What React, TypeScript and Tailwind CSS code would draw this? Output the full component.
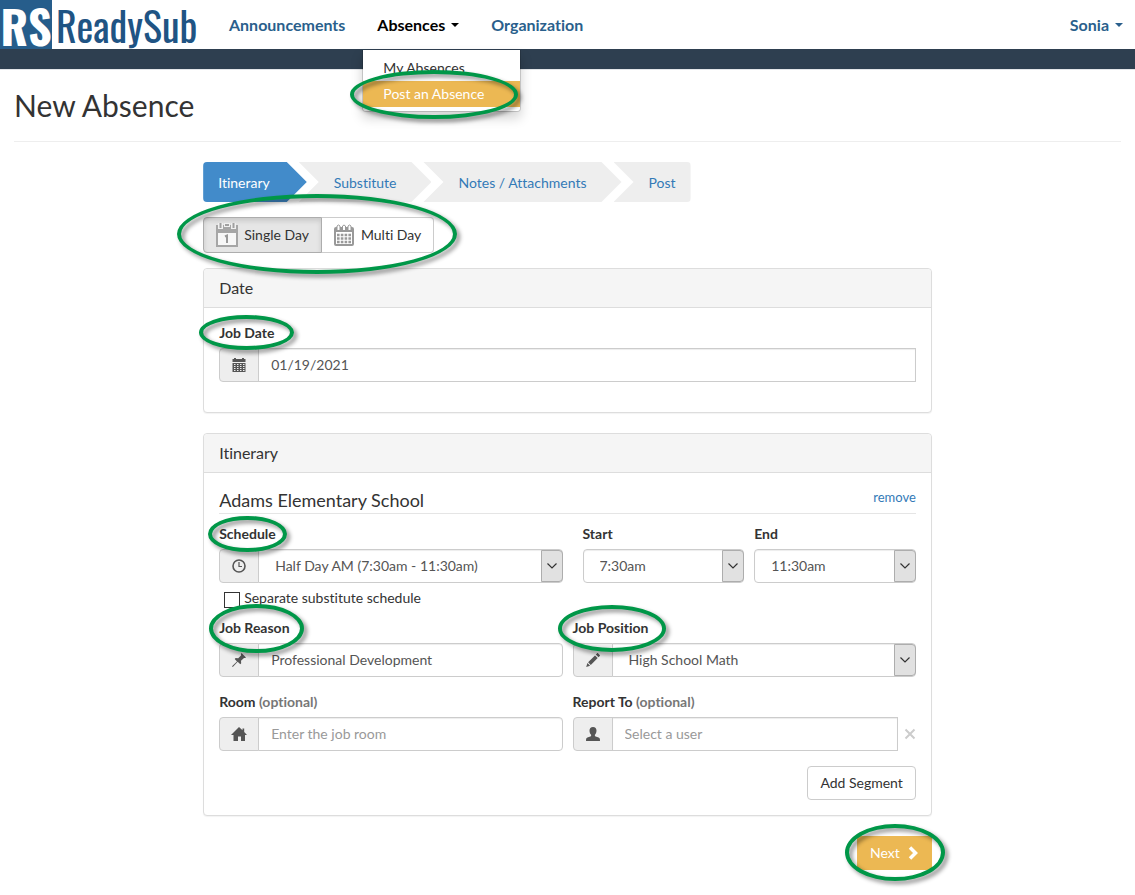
import { useState, type ReactNode } from 'react';
import clsx from 'clsx';

interface IconProps {
  className?: string;
}

function CalendarIcon() {
  return (
    <svg viewBox="0 0 14 14" className="h-3.5 w-3.5" fill="currentColor" aria-hidden="true">
      <path d="M2 0h2v1h6V0h2v1h1.5v3H.5V1H2z" />
      <path
        fillRule="evenodd"
        d="M.5 5h13v9H.5zM2 6v1h1.500V6zm3 0v1h1.500V6zm3 0v1h1.500V6zm3 0v1h1.500V6zM2 8v1h1.500V8zm3 0v1h1.500V8zm3 0v1h1.500V8zm3 0v1h1.500V8zM2 10v1h1.500v-1zm3 0v1h1.500v-1zm3 0v1h1.500v-1zm3 0v1h1.500v-1zM2 12v1h1.500v-1zm3 0v1h1.500v-1zm3 0v1h1.500v-1zm3 0v1h1.500v-1z"
      />
    </svg>
  );
}

function ClockIcon() {
  return (
    <svg viewBox="0 0 14 14" className="h-3.5 w-3.5" fill="none" stroke="currentColor" aria-hidden="true">
      <circle cx="7" cy="7" r="6" strokeWidth="1.6" />
      <path d="M7 3v4.5h3" strokeWidth="1.2" />
    </svg>
  );
}

function PushpinIcon() {
  return (
    <svg viewBox="0 0 14 14" className="h-3.5 w-3.5" fill="currentColor" aria-hidden="true">
      <path d="M9.500 0L14 4.500l-.8.600-1.200-.2-3 2.800.2 2.600-.9.900-2.600-2.400L.8 14 0 13.200l5-4.800L2.700 6l.9-.9 2.600.2 3-3-.3-1.400z" />
    </svg>
  );
}

function PencilIcon() {
  return (
    <svg viewBox="0 0 14 14" className="h-3.5 w-3.5" fill="currentColor" aria-hidden="true">
      <path d="M11 .4c.4-.4.8-.4 1.200 0l1.500 1.500c.4.4.4.8 0 1.200l-1.200 1.200-2.700-2.700zM9 2.400l2.700 2.700-6.900 6.900-2.700-2.700zM1.400 10l2.700 2.700L.2 13.900z" />
    </svg>
  );
}

function HomeIcon() {
  return (
    <svg viewBox="0 0 16 14" className="h-3.5 w-4" fill="currentColor" aria-hidden="true">
      <path d="M8 0l3.500 3.300V1.500h1.700V5L16 8h-2v6h-4V9.500H7V14H2.500V8H0z" />
    </svg>
  );
}

function UserIcon() {
  return (
    <svg viewBox="0 0 14 14" className="h-3.5 w-3.5" fill="currentColor" aria-hidden="true">
      <path d="M7 0c2.300 0 3.500 1.500 3.500 3.600 0 1.800-.6 3.300-1.600 4.200v1.300c.3.600 4 1.300 4.700 2.200.3.500.4 1.500.4 2.700H0c0-1.200.1-2.200.4-2.700.7-.9 4.400-1.600 4.700-2.200V7.800C4.100 6.900 3.500 5.400 3.500 3.600 3.500 1.500 4.700 0 7 0z" />
    </svg>
  );
}

function ChevronDown({ className }: IconProps) {
  return (
    <svg viewBox="0 0 10 6" className={className} fill="none" stroke="#333" strokeWidth="1.2" aria-hidden="true">
      <path d="M.5.5L5 5 9.500.5" />
    </svg>
  );
}

function Caret() {
  return (
    <svg viewBox="0 0 8 4" className="ml-1.5 h-1 w-2" fill="currentColor" aria-hidden="true">
      <path d="M0 0h8L4 4z" />
    </svg>
  );
}

function SingleDayIcon() {
  return (
    <svg viewBox="0 0 22 24" className="h-6 w-[22px]" aria-hidden="true">
      <path d="M0 2h22v22H0z" fill="#a6a6a6" />
      <path d="M2 10h18v12H2z" fill="#f7f7f7" />
      <path d="M2 0h5v6H2zM15 0h5v6h-5zM8 0h6v4H8z" fill="#f0f0f0" />
      <path d="M3.500 0h2v5h-2zM16.500 0h2v5h-2zM9 1h4v2H9z" fill="#a0a0a0" />
      <path d="M9 13.500l2-1v7.500" fill="none" stroke="#999" strokeWidth="2" />
    </svg>
  );
}

function MultiDayIcon() {
  return (
    <svg viewBox="0 0 20 22" className="h-[22px] w-5" fill="none" aria-hidden="true">
      <rect x="1" y="4" width="18" height="17" rx="1" stroke="#999" strokeWidth="2" />
      <path d="M1 4h18v4H1z" fill="#999" />
      <path d="M3 6V2q1.500-2 3 0v4M8.500 6V2q1.500-2 3 0v4M14 6V2q1.500-2 3 0v4" fill="#fff" stroke="#999" />
      <path d="M3 11h14M3 14.500h14M3 18h14" stroke="#999" strokeWidth="2.500" strokeDasharray="2.600 1.200" />
    </svg>
  );
}

// Green callout drawn around whatever relative parent it sits in
function Ring({ className }: { className: string }) {
  return (
    <span
      aria-hidden="true"
      className={clsx(
        'pointer-events-none absolute z-30 rounded-[50%] border-4 border-[#009748] drop-shadow-[3px_3px_2px_rgba(0,0,0,0.45)]',
        className,
      )}
    />
  );
}

function FieldLabel({ id, text, optional, ring }: { id: string; text: string; optional?: boolean; ring?: string }) {
  return (
    <div className="mb-[5px] flex">
      <label htmlFor={id} className="relative font-bold">
        {text}
        {optional ? <span className="text-[#777]"> (optional)</span> : null}
        {ring ? <Ring className={ring} /> : null}
      </label>
    </div>
  );
}

function Addon({ children }: { children: ReactNode }) {
  return (
    <span className="flex w-10 shrink-0 items-center justify-center rounded-l border border-[#ccc] bg-[#eee] text-[#555]">
      {children}
    </span>
  );
}

interface InputFieldProps {
  id: string;
  icon: ReactNode;
  value?: string;
  placeholder?: string;
  square?: boolean;
}

function InputField({ id, icon, value, placeholder, square }: InputFieldProps) {
  return (
    <div className="flex h-[34px] min-w-0 flex-1">
      <Addon>{icon}</Addon>
      <input
        id={id}
        type="text"
        defaultValue={value}
        placeholder={placeholder}
        className={clsx(
          '-ml-px min-w-0 flex-1 border border-[#ccc] bg-white px-3 text-[#555] shadow-[inset_0_1px_1px_rgba(0,0,0,0.075)] outline-none placeholder:text-[#999]',
          !square && 'rounded-r',
        )}
      />
    </div>
  );
}

function SelectField({ id, icon, options }: { id: string; icon?: ReactNode; options: string[] }) {
  return (
    <div className="flex h-[34px]">
      {icon ? <Addon>{icon}</Addon> : null}
      <div className={clsx('relative min-w-0 flex-1', icon && '-ml-px')}>
        <select
          id={id}
          className={clsx(
            'h-full w-full appearance-none rounded-r border border-[#ccc] bg-white pr-6 pl-4 text-[#555] shadow-[inset_0_1px_1px_rgba(0,0,0,0.075)] outline-none',
            !icon && 'rounded-l',
          )}
        >
          {options.map((option) => (
            <option key={option}>{option}</option>
          ))}
        </select>
        <span className="pointer-events-none absolute inset-y-px right-0 flex w-[22px] items-center justify-center rounded-r-sm border border-[#adadad] bg-[#e1e1e1]">
          <ChevronDown className="h-1.5 w-2.5" />
        </span>
      </div>
    </div>
  );
}

function Panel({ title, children }: { title: string; children: ReactNode }) {
  return (
    <section className="mb-5 rounded border border-[#ddd] bg-white shadow-[0_1px_1px_rgba(0,0,0,0.05)]">
      <h2 className="rounded-t border-b border-[#ddd] bg-[#f5f5f5] px-[15px] py-2.5 text-base leading-[18px]">{title}</h2>
      <div className="p-[15px]">{children}</div>
    </section>
  );
}

function NavBar() {
  return (
    <header>
      <nav className="flex h-[49px] items-center bg-white text-base font-bold text-[#2a5f8c]">
        <a
          href="#"
          className="flex h-full w-[213px] shrink-0 items-center font-['Oswald','Roboto_Condensed','Open_Sans_Condensed','Noto_Sans_ExtraCondensed','Liberation_Sans',sans-serif] leading-none"
        >
          <span className="flex h-full w-[52px] shrink-0 items-center justify-center bg-[#265d8b] text-[46px] text-white">RS</span>
          <span className="ml-1 text-[40px] font-normal text-[#1f5484]">ReadySub</span>
        </a>
        <a href="#" className="px-4">Announcements</a>
        <div className="relative flex h-full items-center">
          <button type="button" className="flex items-center px-4 text-black">
            Absences
            <Caret />
          </button>
          <ul className="absolute top-[50px] left-px z-20 w-[159px] rounded-b border border-t-0 border-black/15 bg-white bg-clip-padding pt-[5px] pb-1 text-sm leading-5 font-normal text-[#333] shadow-[0_6px_12px_rgba(0,0,0,0.175)]">
            <li>
              <a href="#" className="block px-5 py-[3px]">My Absences</a>
            </li>
            <li className="relative">
              <a href="#" className="block bg-[#ecb853] px-5 py-[3px] text-white">Post an Absence</a>
              <Ring className="-top-[11px] right-0.5 -bottom-3 -left-[13px]" />
            </li>
          </ul>
        </div>
        <a href="#" className="px-4">Organization</a>
        <button type="button" className="ml-auto flex items-center px-3">
          Sonia
          <Caret />
        </button>
      </nav>
      <div className="h-[21px] border-b border-[#e3e6e9] bg-[#2e3f50]" />
    </header>
  );
}

const steps = ['Itinerary', 'Substitute', 'Notes / Attachments', 'Post'];

function StepWizard() {
  return (
    <ol className="flex h-10">
      {steps.map((step, i) => (
        <li
          key={step}
          className={clsx(
            'flex items-center pt-0.5',
            i === 0 &&
              'rounded-l bg-[#428bca] pr-[37px] pl-[15px] text-white [clip-path:polygon(0_0,calc(100%_-_20px)_0,100%_50%,calc(100%_-_20px)_100%,0_100%)]',
            i > 0 && '-ml-2 bg-[#eee] text-[#337ab7]',
            i > 0 &&
              i < steps.length - 1 &&
              'px-[35px] [clip-path:polygon(0_0,calc(100%_-_20px)_0,100%_50%,calc(100%_-_20px)_100%,0_100%,20px_50%)]',
            i === steps.length - 1 &&
              'rounded-r pr-[15px] pl-[35px] [clip-path:polygon(0_0,100%_0,100%_100%,0_100%,20px_50%)]',
          )}
        >
          <a href="#">{step}</a>
        </li>
      ))}
    </ol>
  );
}

function DayToggle() {
  const [multi, setMulti] = useState(false);
  const active = 'border-[#adadad] bg-[#e6e6e6] shadow-[inset_0_3px_5px_rgba(0,0,0,0.125)]';

  return (
    <div className="my-[15px] flex">
      <div className="relative flex h-9">
        <button
          type="button"
          aria-pressed={!multi}
          onClick={() => setMulti(false)}
          className={clsx('flex items-center gap-1.5 rounded-l border px-3', multi ? 'border-[#ccc]' : active)}
        >
          <SingleDayIcon />
          Single Day
        </button>
        <button
          type="button"
          aria-pressed={multi}
          onClick={() => setMulti(true)}
          className={clsx(
            '-ml-px flex items-center gap-[7px] rounded-r border px-3',
            multi ? active : 'border-[#ccc] border-l-[#adadad]',
          )}
        >
          <MultiDayIcon />
          Multi Day
        </button>
        <Ring className="-top-[23px] -right-[23px] -bottom-[21px] -left-[26px]" />
      </div>
    </div>
  );
}

export default function App() {
  return (
    <div className="min-h-screen bg-white font-['Lato',sans-serif] text-sm leading-5 text-[#333] [font-variant-ligatures:none]">
      <NavBar />
      <h1 className="mx-3.5 mb-5 border-b border-[#eee] pt-[19px] pb-[19px] text-[30px] leading-[33px]">New Absence</h1>
      <main className="mx-auto w-2/3 px-3.5 pb-6">
        <StepWizard />
        <DayToggle />

        <Panel title="Date">
          <FieldLabel id="job-date" text="Job Date" ring="-top-2 -right-5 -bottom-[7px] -left-5" />
          <div className="mb-[15px] flex">
            <InputField id="job-date" icon={<CalendarIcon />} value="01/19/2021" square />
          </div>
        </Panel>

        <Panel title="Itinerary">
          <div className="mb-2.5 flex h-[26px] justify-between border-b border-[#e5e5e5]">
            <h3 className="text-lg leading-6">Adams Elementary School</h3>
            <a href="#" className="text-[13px] leading-[18px] text-[#337ab7]">remove</a>
          </div>

          <div className="grid grid-cols-2 gap-x-2.5">
            <div>
              <FieldLabel id="schedule" text="Schedule" ring="-top-2 -right-[11px] -bottom-2 -left-[11px]" />
              <SelectField id="schedule" icon={<ClockIcon />} options={['Half Day AM (7:30am - 11:30am)']} />
            </div>
            <div className="grid grid-cols-2 gap-x-2.5 pl-2.5">
              <div>
                <FieldLabel id="start" text="Start" />
                <SelectField id="start" options={['7:30am']} />
              </div>
              <div>
                <FieldLabel id="end" text="End" />
                <SelectField id="end" options={['11:30am']} />
              </div>
            </div>
          </div>

          <label className="mt-[5px] mb-2.5 ml-[5px] flex gap-1">
            <input type="checkbox" className="mt-1 h-4 w-4 appearance-none border border-[#333] bg-white" />
            Separate substitute schedule
          </label>

          <div className="grid grid-cols-2 gap-x-2.5 gap-y-[15px]">
            <div>
              <FieldLabel id="reason" text="Job Reason" ring="-top-3.5 -right-3.5 -bottom-[15px] -left-2.5" />
              <InputField id="reason" icon={<PushpinIcon />} value="Professional Development" />
            </div>
            <div>
              <FieldLabel id="position" text="Job Position" ring="-top-[13px] -right-[18px] -bottom-3.5 -left-[15px]" />
              <SelectField id="position" icon={<PencilIcon />} options={['High School Math']} />
            </div>
            <div>
              <FieldLabel id="room" text="Room" optional />
              <InputField id="room" icon={<HomeIcon />} placeholder="Enter the job room" />
            </div>
            <div>
              <FieldLabel id="report-to" text="Report To" optional />
              <div className="flex items-center">
                <InputField id="report-to" icon={<UserIcon />} placeholder="Select a user" square />
                <button type="button" aria-label="Clear user" className="flex w-[18px] justify-end">
                  <svg viewBox="0 0 12 12" className="h-3 w-3" stroke="#ccc" strokeWidth="2" aria-hidden="true">
                    <path d="M1.500 1.500l9 9M10.500 1.500l-9 9" />
                  </svg>
                </button>
              </div>
            </div>
          </div>

          <div className="mt-[15px] flex justify-end">
            <button type="button" className="h-[34px] rounded border border-[#ccc] bg-white px-3">
              Add Segment
            </button>
          </div>
        </Panel>

        <div className="flex justify-end">
          <button type="button" className="relative flex h-[34px] items-center gap-2 bg-[#ecb853] px-[13px] text-white">
            Next
            <svg viewBox="0 0 11 14" className="h-3.5 w-[11px]" fill="none" stroke="currentColor" strokeWidth="3.5" aria-hidden="true">
              <path d="M2 1.500L7.500 7 2 12.500" />
            </svg>
            <Ring className="-top-3 -right-[13px] -bottom-[11px] -left-3" />
          </button>
        </div>
      </main>
    </div>
  );
}
